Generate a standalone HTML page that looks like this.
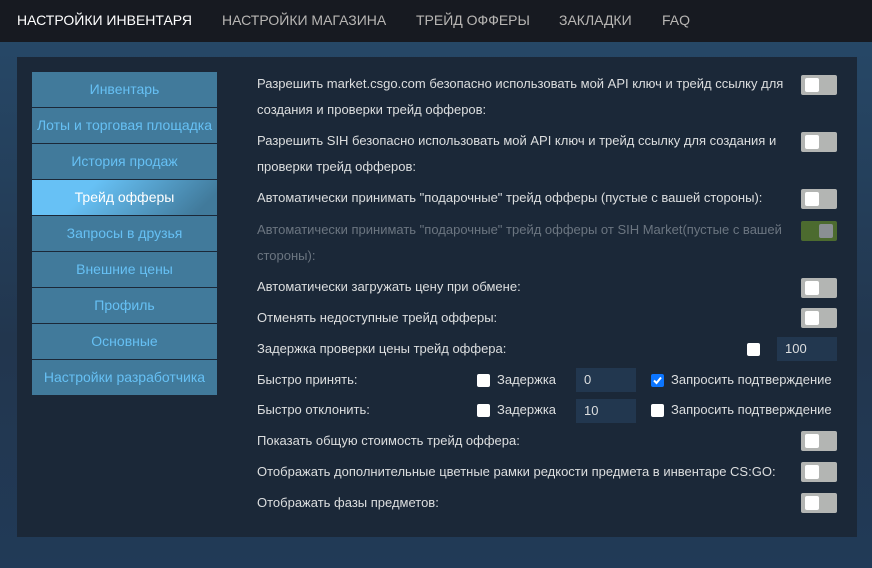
<!DOCTYPE html><html><head><meta charset="utf-8"><style>
*{margin:0;padding:0;box-sizing:border-box}
body{width:872px;height:568px;overflow:hidden;font-family:"Liberation Sans",Arial,sans-serif;background:linear-gradient(180deg,#274a6a 0%,#22364e 60%,#213a57 100%);position:relative}
.nav{position:absolute;left:0;top:0;width:872px;height:42px;background:#171a21}
.nav span{position:absolute;top:12px;font-size:14px;color:#b8b6b4}
.panel{position:absolute;left:17px;top:57px;width:840px;height:480px;background:#1b2838}
.side{position:absolute;left:32px;top:72px;width:185px}
.side div{height:35px;margin-bottom:1px;background:#417a9b;color:#66c0f4;font-size:14px;text-align:center;line-height:35px}
.side div.act{background:linear-gradient(135deg,#67c1f5 30%,#417a9b 90%);color:#fff}
.t{position:absolute;left:257px;font-size:13px;color:#dcdedf;line-height:26px}
.tg{position:absolute;left:801px;width:36px;height:20px;background:#b3b5b3;border-radius:2px}
.tg:after{content:"";position:absolute;left:4px;top:3px;width:14px;height:14px;background:#fff;border-radius:2px}
.tg.dis{background:#4c6b2f}.tg.dis:after{left:18px;background:#8a8f93}
.cb{position:absolute;width:13px;height:13px;background:#fff;border-radius:2px}
.cb.on{background:#0b75ff}
.in{position:absolute;width:60px;height:24px;background:#22374f;color:#dcdedf;font-size:13px;line-height:24px;padding-left:8px}
</style></head><body>
<div class="nav"><span style="left:17px;color:#fff">НАСТРОЙКИ ИНВЕНТАРЯ</span><span style="left:222px">НАСТРОЙКИ МАГАЗИНА</span><span style="left:416px">ТРЕЙД ОФФЕРЫ</span><span style="left:559px">ЗАКЛАДКИ</span><span style="left:662px">FAQ</span></div>
<div class="panel"></div>
<div class="side"><div>Инвентарь</div><div>Лоты и торговая площадка</div><div>История продаж</div><div class="act">Трейд офферы</div><div>Запросы в друзья</div><div>Внешние цены</div><div>Профиль</div><div>Основные</div><div>Настройки разработчика</div></div>
<div class="t" style="top:71px;width:540px">Разрешить market.csgo.com безопасно использовать мой API ключ и трейд ссылку для создания и проверки трейд офферов:</div>
<div class="tg" style="top:75px"></div>
<div class="t" style="top:128px;width:540px">Разрешить SIH безопасно использовать мой API ключ и трейд ссылку для создания и проверки трейд офферов:</div>
<div class="tg" style="top:132px"></div>
<div class="t" style="top:185px">Автоматически принимать "подарочные" трейд офферы (пустые с вашей стороны):</div>
<div class="tg" style="top:189px"></div>
<div class="t" style="top:217px;width:535px;color:#6b7580">Автоматически принимать "подарочные" трейд офферы от SIH Market(пустые с вашей стороны):</div>
<div class="tg dis" style="top:221px"></div>
<div class="t" style="top:274px">Автоматически загружать цену при обмене:</div>
<div class="tg" style="top:278px"></div>
<div class="t" style="top:305px">Отменять недоступные трейд офферы:</div>
<div class="tg" style="top:308px"></div>
<div class="t" style="top:336px">Задержка проверки цены трейд оффера:</div>
<div class="cb" style="left:747px;top:343px"></div><div class="in" style="left:777px;top:337px">100</div>
<div class="t" style="top:367px">Быстро принять:</div>
<div class="cb" style="left:477px;top:374px"></div><div class="t" style="left:497px;top:367px">Задержка</div>
<div class="in" style="left:576px;top:368px">0</div>
<div class="cb on" style="left:651px;top:374px"><svg width="13" height="13" viewBox="0 0 13 13" style="position:absolute;left:0;top:0"><path d="M3 6.5l2.5 2.5L10 3.5" stroke="#fff" stroke-width="2" fill="none"/></svg></div>
<div class="t" style="left:671px;top:367px">Запросить подтверждение</div>
<div class="t" style="top:397px">Быстро отклонить:</div>
<div class="cb" style="left:477px;top:404px"></div><div class="t" style="left:497px;top:397px">Задержка</div>
<div class="in" style="left:576px;top:399px">10</div>
<div class="cb" style="left:651px;top:404px"></div>
<div class="t" style="left:671px;top:397px">Запросить подтверждение</div>
<div class="t" style="top:428px">Показать общую стоимость трейд оффера:</div>
<div class="tg" style="top:431px"></div>
<div class="t" style="top:459px">Отображать дополнительные цветные рамки редкости предмета в инвентаре CS:GO:</div>
<div class="tg" style="top:462px"></div>
<div class="t" style="top:490px">Отображать фазы предметов:</div>
<div class="tg" style="top:493px"></div>
</body></html>
